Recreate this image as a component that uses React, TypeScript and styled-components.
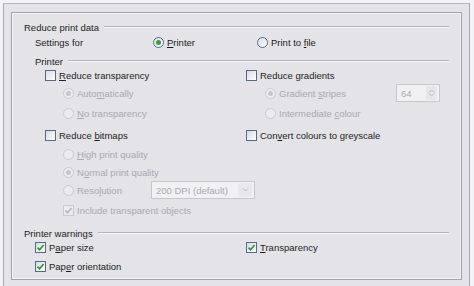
import React from "react";
import styled, { createGlobalStyle } from "styled-components";

const GlobalStyle = createGlobalStyle`
  body {
    margin: 0;
    font-family: "Liberation Sans", Arial, sans-serif;
    font-size: 9.5px;
    color: #1e1e22;
  }
`;

const Frame = styled.div`
  width: 474px;
  height: 286px;
  box-sizing: border-box;
  padding: 3px 4px 0 3px;
  background: #f3f3f6;
`;

const Dialog = styled.div`
  height: 100%;
  box-sizing: border-box;
  padding: 8px 7px 6px 7px;
  background: #e3e3e8;
  border-left: 1px solid #a6a6ae;
  border-top: 1px solid #b6b6be;
  border-right: 1px solid #a6a6ae;
`;

const Panel = styled.div`
  height: 100%;
  box-sizing: border-box;
  border: 1px solid #a2a2aa;
  box-shadow: inset 1px 1px 0 #f4f4f7, inset -1px -1px 0 #f4f4f7;
  padding-top: 7px;
`;

const Legend = styled.div<{ $indent: number; $mt?: number }>`
  display: flex;
  align-items: center;
  height: 14px;
  margin-left: ${(p) => p.$indent}px;
  margin-right: 12px;
  margin-top: ${(p) => p.$mt ?? 0}px;
  white-space: nowrap;
`;

const Rule = styled.div`
  flex: 1;
  margin-left: 5px;
  border-top: 1px solid #b3b3bb;
  border-bottom: 1px solid #f6f6f8;
`;

const Row = styled.div<{ $indent: number; $mt?: number; $h?: number }>`
  display: flex;
  align-items: center;
  height: ${(p) => p.$h ?? 18}px;
  margin-left: ${(p) => p.$indent}px;
  margin-top: ${(p) => p.$mt ?? 0}px;
  white-space: nowrap;
`;

const Cell = styled.div<{ $w?: number; $pad?: number }>`
  display: flex;
  align-items: center;
  width: ${(p) => (p.$w ? `${p.$w}px` : "auto")};
  padding-left: ${(p) => p.$pad ?? 0}px;
  box-sizing: border-box;
  flex-shrink: 0;
`;

const OptionWrap = styled.label<{ $disabled?: boolean; $w?: number }>`
  display: flex;
  align-items: center;
  gap: 3px;
  width: ${(p) => (p.$w ? `${p.$w}px` : "auto")};
  color: ${(p) => (p.$disabled ? "#a9a9b2" : "#1e1e22")};
`;

const Box = styled.span<{ $disabled?: boolean; $round?: boolean }>`
  display: inline-flex;
  align-items: center;
  justify-content: center;
  width: 11px;
  height: 11px;
  box-sizing: border-box;
  border: 1px solid ${(p) => (p.$disabled ? "#c9c9d1" : "#55698c")};
  border-radius: ${(p) => (p.$round ? "50%" : "0")};
  background: ${(p) =>
    p.$disabled
      ? "#ebebef"
      : "linear-gradient(135deg, #d9dae3 0%, #f4f4f7 70%, #ffffff 100%)"};
`;

const Dot = styled.span<{ $disabled?: boolean }>`
  width: 5px;
  height: 5px;
  border-radius: 50%;
  background: ${(p) => (p.$disabled ? "#c6c6cd" : "#3c9e3a")};
`;

const Key = styled.u`
  text-underline-offset: 1px;
`;

const Spin = styled.div`
  display: flex;
  align-items: center;
  justify-content: space-between;
  margin-left: auto;
  width: 44px;
  height: 18px;
  box-sizing: border-box;
  padding: 0 2px 0 4px;
  border: 1px solid #c6c6ce;
  background: #f1f1f4;
  color: #a9a9b2;
`;

const SpinButtons = styled.div`
  display: flex;
  flex-direction: column;
  align-items: center;
  justify-content: center;
  width: 11px;
  height: 14px;
  border-radius: 2px;
  background: #e6e6ea;
`;

const Select = styled.div`
  display: flex;
  align-items: center;
  justify-content: space-between;
  width: 104px;
  height: 18px;
  box-sizing: border-box;
  padding: 0 2px 0 4px;
  border: 1px solid #c6c6ce;
  background: #f1f1f4;
  color: #a9a9b2;
`;

const SelectButton = styled.div`
  display: flex;
  align-items: center;
  justify-content: center;
  width: 14px;
  height: 14px;
  border-radius: 2px;
  background: #e8e8ec;
`;

type OptionProps = {
  kind: "check" | "radio";
  checked?: boolean;
  disabled?: boolean;
  width?: number;
  children: React.ReactNode;
};

const Tick = ({ disabled }: { disabled?: boolean }) => (
  <svg width="9" height="9" viewBox="0 0 9 9">
    <polyline
      points="1.5,4.6 3.6,6.8 7.6,2"
      fill="none"
      stroke={disabled ? "#b9b9c1" : "#2f9a2f"}
      strokeWidth="1.7"
    />
  </svg>
);

const Option = ({ kind, checked, disabled, width, children }: OptionProps) => (
  <OptionWrap $disabled={disabled} $w={width}>
    <Box $disabled={disabled} $round={kind === "radio"}>
      {checked && (kind === "radio" ? <Dot $disabled={disabled} /> : <Tick disabled={disabled} />)}
    </Box>
    <span>{children}</span>
  </OptionWrap>
);

const Chevron = ({ up }: { up?: boolean }) => (
  <svg width="7" height="4" viewBox="0 0 7 4">
    <polyline
      points={up ? "1,3.5 3.5,1 6,3.5" : "1,0.5 3.5,3 6,0.5"}
      fill="none"
      stroke="#b4b4bc"
      strokeWidth="1"
    />
  </svg>
);

export default function App() {
  return (
    <Frame>
      <GlobalStyle />
      <Dialog>
        <Panel>
          <Legend $indent={12}>
            Reduce print data
            <Rule />
          </Legend>
          <Row $indent={23} $h={16}>
            <Cell $w={118}>Settings for</Cell>
            <Cell $w={104}>
              <Option kind="radio" checked>
                <Key>P</Key>rinter
              </Option>
            </Cell>
            <Cell>
              <Option kind="radio">
                Print to <Key>f</Key>ile
              </Option>
            </Cell>
          </Row>

          <Legend $indent={23} $mt={4}>
            Printer
            <Rule />
          </Legend>
          <Row $indent={33} $mt={-2}>
            <Cell $w={201}>
              <Option kind="check">
                <Key>R</Key>educe transparency
              </Option>
            </Cell>
            <Cell>
              <Option kind="check">
                Reduce <Key>g</Key>radients
              </Option>
            </Cell>
          </Row>
          <Row $indent={33}>
            <Cell $w={201} $pad={18}>
              <Option kind="radio" checked disabled>
                Auto<Key>m</Key>atically
              </Option>
            </Cell>
            <Cell $w={194} $pad={19}>
              <Option kind="radio" checked disabled>
                Gradient <Key>s</Key>tripes
              </Option>
              <Spin>
                64
                <SpinButtons>
                  <Chevron up />
                  <Chevron />
                </SpinButtons>
              </Spin>
            </Cell>
          </Row>
          <Row $indent={33} $mt={2}>
            <Cell $w={201} $pad={18}>
              <Option kind="radio" disabled>
                <Key>N</Key>o transparency
              </Option>
            </Cell>
            <Cell $pad={19}>
              <Option kind="radio" disabled>
                Intermediate <Key>c</Key>olour
              </Option>
            </Cell>
          </Row>
          <Row $indent={33} $mt={4}>
            <Cell $w={201}>
              <Option kind="check">
                Reduce <Key>b</Key>itmaps
              </Option>
            </Cell>
            <Cell>
              <Option kind="check">
                Con<Key>v</Key>ert colours to greyscale
              </Option>
            </Cell>
          </Row>
          <Row $indent={33} $mt={1}>
            <Cell $pad={18}>
              <Option kind="radio" disabled>
                <Key>H</Key>igh print quality
              </Option>
            </Cell>
          </Row>
          <Row $indent={33}>
            <Cell $pad={18}>
              <Option kind="radio" checked disabled>
                N<Key>o</Key>rmal print quality
              </Option>
            </Cell>
          </Row>
          <Row $indent={33}>
            <Cell $pad={18}>
              <Option kind="radio" disabled width={88}>
                Reso<Key>l</Key>ution
              </Option>
              <Select>
                200 DPI (default)
                <SelectButton>
                  <Chevron />
                </SelectButton>
              </Select>
            </Cell>
          </Row>
          <Row $indent={33} $mt={2}>
            <Cell $pad={18}>
              <Option kind="check" checked disabled>
                Include transparent objects
              </Option>
            </Cell>
          </Row>

          <Legend $indent={12} $mt={7}>
            Printer warnings
            <Rule />
          </Legend>
          <Row $indent={23} $mt={-1} $h={16}>
            <Cell $w={211}>
              <Option kind="check" checked>
                P<Key>a</Key>per size
              </Option>
            </Cell>
            <Cell>
              <Option kind="check" checked>
                <Key>T</Key>ransparency
              </Option>
            </Cell>
          </Row>
          <Row $indent={23} $mt={3} $h={16}>
            <Cell>
              <Option kind="check" checked>
                Pap<Key>e</Key>r orientation
              </Option>
            </Cell>
          </Row>
        </Panel>
      </Dialog>
    </Frame>
  );
}
